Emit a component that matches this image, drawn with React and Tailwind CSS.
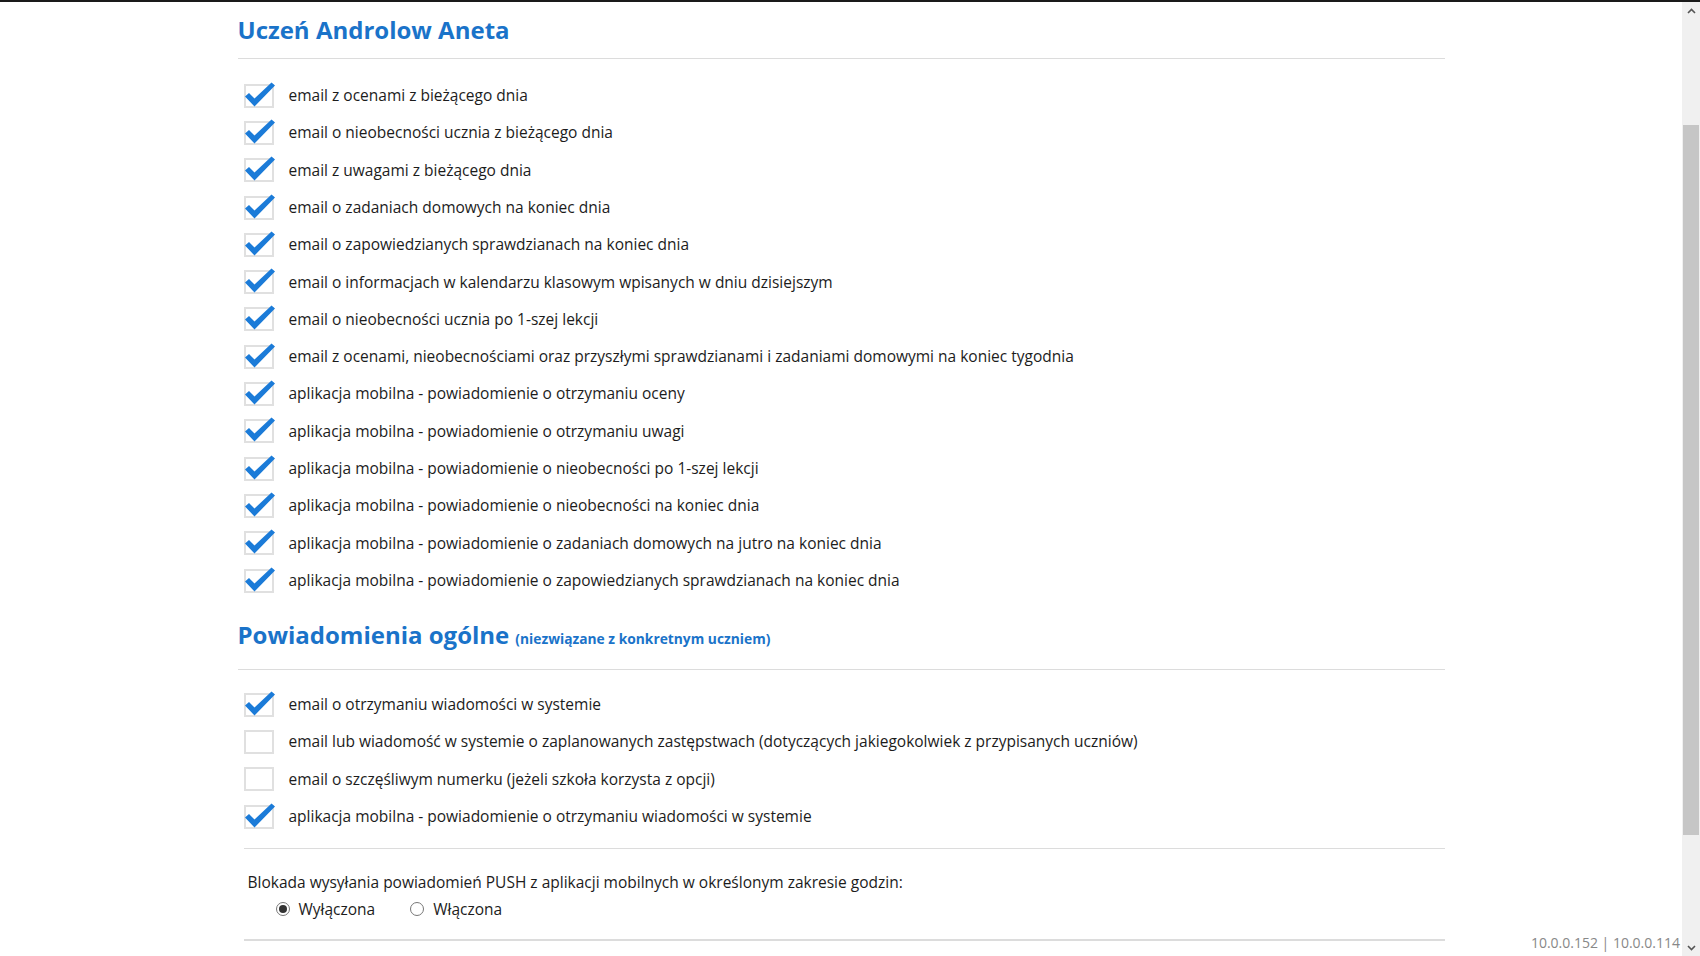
import React from 'react';

const studentItems = [
  { label: 'email z ocenami z bieżącego dnia', on: true },
  { label: 'email o nieobecności ucznia z bieżącego dnia', on: true },
  { label: 'email z uwagami z bieżącego dnia', on: true },
  { label: 'email o zadaniach domowych na koniec dnia', on: true },
  { label: 'email o zapowiedzianych sprawdzianach na koniec dnia', on: true },
  { label: 'email o informacjach w kalendarzu klasowym wpisanych w dniu dzisiejszym', on: true },
  { label: 'email o nieobecności ucznia po 1-szej lekcji', on: true },
  { label: 'email z ocenami, nieobecnościami oraz przyszłymi sprawdzianami i zadaniami domowymi na koniec tygodnia', on: true },
  { label: 'aplikacja mobilna - powiadomienie o otrzymaniu oceny', on: true },
  { label: 'aplikacja mobilna - powiadomienie o otrzymaniu uwagi', on: true },
  { label: 'aplikacja mobilna - powiadomienie o nieobecności po 1-szej lekcji', on: true },
  { label: 'aplikacja mobilna - powiadomienie o nieobecności na koniec dnia', on: true },
  { label: 'aplikacja mobilna - powiadomienie o zadaniach domowych na jutro na koniec dnia', on: true },
  { label: 'aplikacja mobilna - powiadomienie o zapowiedzianych sprawdzianach na koniec dnia', on: true },
];

const generalItems = [
  { label: 'email o otrzymaniu wiadomości w systemie', on: true },
  { label: 'email lub wiadomość w systemie o zaplanowanych zastępstwach (dotyczących jakiegokolwiek z przypisanych uczniów)', on: false },
  { label: 'email o szczęśliwym numerku (jeżeli szkoła korzysta z opcji)', on: false },
  { label: 'aplikacja mobilna - powiadomienie o otrzymaniu wiadomości w systemie', on: true },
];

const CheckBox = ({ on }) => (
  <span className="relative block w-[30px] h-[24px] shrink-0">
    <span className="absolute inset-0 border-2 border-[#e0e0e0] bg-white" />
    {on && (
      <svg className="absolute left-0 top-0 overflow-visible" width="30" height="24" viewBox="0 0 30 24">
        <path d="M1 12.5 L5 9 L10.5 14.5 L27.5 -1.5 L31 1.5 L10.5 22.5 Z" fill="#1b7bd8" />
      </svg>
    )}
  </span>
);

const Row = ({ label, on }) => (
  <div className="flex items-center h-[37.3px] pl-[6px]">
    <CheckBox on={on} />
    <span className="ml-[15px] text-[15.5px] font-medium text-[#1c1c1c]">{label}</span>
  </div>
);

const Radio = ({ checked, label }) => (
  <label className="flex items-center gap-[9px]">
    <span className="w-[14px] h-[14px] rounded-full border border-[#777] bg-white flex items-center justify-center">
      {checked && <span className="w-[8px] h-[8px] rounded-full bg-[#333]" />}
    </span>
    <span className="text-[15.5px] font-medium text-[#1c1c1c]">{label}</span>
  </label>
);

export default function App() {
  return (
    <div
      className="relative h-[956px] w-[1700px] overflow-hidden bg-white flex flex-col"
      style={{ fontFamily: '"Open Sans", "Noto Sans", sans-serif' }}
    >
      <div className="h-[2px] bg-[#1a1a1a] shrink-0" />
      <div className="flex flex-1 min-h-0">
        <div className="flex-1 flex flex-col">
          <div className="w-[1207px] mx-auto">
            <h2 className="h-[56px] flex items-center text-[24px] font-bold text-[#1a73c9]">
              Uczeń Androlow Aneta
            </h2>
            <div className="h-[1px] bg-[#dcdcdc]" />
            <div className="pt-[18px]">
              {studentItems.map((it) => (
                <Row key={it.label} {...it} />
              ))}
            </div>
            <div className="h-[50px] flex items-end pb-[2px]">
              <h2 className="text-[24px] font-bold text-[#1a73c9] leading-none">Powiadomienia ogólne</h2>
              <span className="ml-[6px] mb-[1px] text-[13.8px] font-bold text-[#1a73c9] leading-none">(niezwiązane z konkretnym uczniem)</span>
            </div>
            <div className="mt-[20px] h-[1px] bg-[#dcdcdc]" />
            <div className="pt-[16px]">
              {generalItems.map((it) => (
                <Row key={it.label} {...it} />
              ))}
            </div>
            <div className="mt-[13px] ml-[6px] h-[1px] bg-[#dcdcdc]" />
            <div className="pl-[10px] pt-[22px]">
              <p className="text-[15.5px] font-medium text-[#1c1c1c]">
                Blokada wysyłania powiadomień PUSH z aplikacji mobilnych w określonym zakresie godzin:
              </p>
              <div className="flex items-center gap-[35px] pl-[28px] mt-[3px]">
                <Radio checked label="Wyłączona" />
                <Radio label="Włączona" />
              </div>
            </div>
            <div className="mt-[18px] ml-[6px] h-[2px] bg-[#dcdcdc]" />
          </div>
        </div>
        <div className="w-[18px] bg-[#f0f0f0] flex flex-col items-center shrink-0">
          <div className="h-[17px] flex items-center justify-center">
            <svg width="9" height="6" viewBox="0 0 9 6">
              <path d="M1 5 L4.5 1.5 L8 5" stroke="#555" strokeWidth="1.6" fill="none" />
            </svg>
          </div>
          <div className="mt-[106px] w-[16px] h-[710px] bg-[#c6c6c6]" />
          <div className="flex-1" />
          <div className="h-[17px] flex items-center justify-center">
            <svg width="9" height="6" viewBox="0 0 9 6">
              <path d="M1 1 L4.5 4.5 L8 1" stroke="#555" strokeWidth="1.6" fill="none" />
            </svg>
          </div>
        </div>
      </div>
      <div className="absolute right-[20px] bottom-[3px] text-[14px] text-[#888]">
        10.0.0.152 | 10.0.0.114
      </div>
    </div>
  );
}
